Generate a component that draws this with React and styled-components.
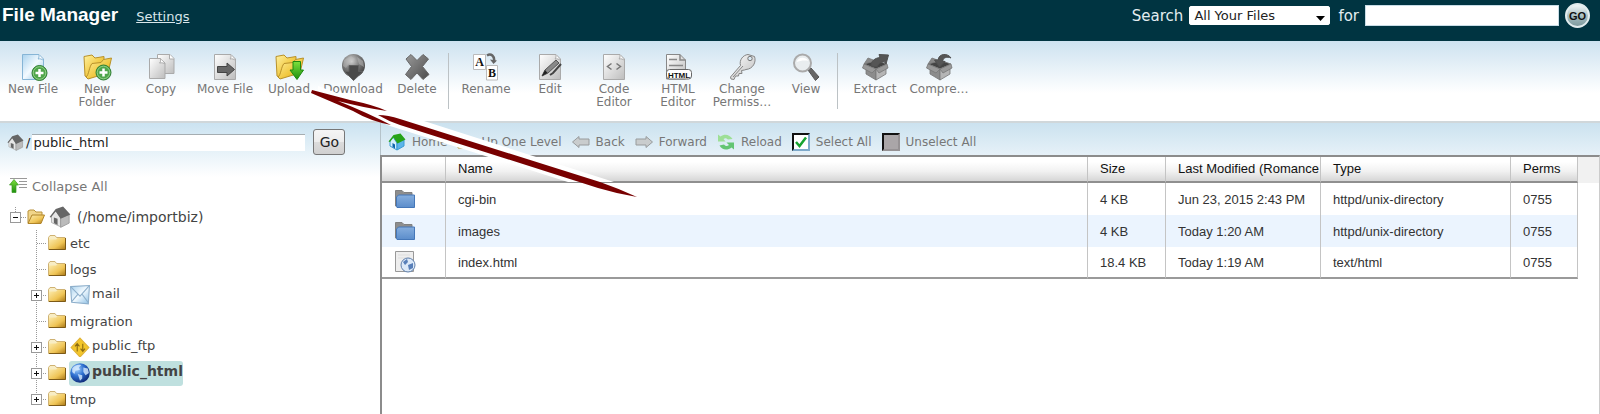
import React from "react";
import styled, { createGlobalStyle } from "styled-components";

const GlobalStyle = createGlobalStyle`
  * { box-sizing: border-box; }
  body {
    margin: 0;
    background: #fff;
    color: #333;
    font-family: "DejaVu Sans", Verdana, sans-serif;
    font-size: 13px;
  }
  button, input, select { font-family: inherit; margin: 0; }
  svg { display: block; flex: none; }
`;

const Page = styled.div`
  display: flex;
  flex-direction: column;
  min-height: 100vh;
  position: relative;
  overflow: hidden;
`;

/* ---------- header ---------- */

const Header = styled.header`
  display: flex;
  align-items: center;
  justify-content: space-between;
  height: 41px;
  padding: 0 10px 12px 2px;
  background: #003441;
  color: #fff;
`;

const Brand = styled.div`
  display: flex;
  align-items: baseline;
  gap: 18px;
`;

const Title = styled.h1`
  margin: 0;
  font: bold 19px/24px "Liberation Sans", Arial, sans-serif;
`;

const SettingsLink = styled.a`
  color: #d9e6ea;
  font-size: 13px;
`;

const SearchForm = styled.form`
  display: flex;
  align-items: center;
  gap: 6px;
  padding-top: 2px;
  font-size: 15px;
  color: #e3edf0;
`;

const SelectWrap = styled.span`
  position: relative;
  display: block;
  margin-right: 2px;
  svg { position: absolute; right: 5px; top: 10px; pointer-events: none; }
`;

const Select = styled.select`
  appearance: none;
  display: block;
  width: 141px;
  height: 19px;
  padding: 0 4px;
  border: 1px solid #fff;
  border-radius: 2px;
  background: #fff;
  color: #222;
  font-size: 13px;
  line-height: 17px;
`;

const SearchInput = styled.input`
  width: 194px;
  height: 21px;
  border: 1px solid #c8dce6;
  background: #fff;
`;

const RoundButton = styled.button`
  width: 25px;
  height: 25px;
  padding: 0;
  border: 2px solid #e2ecee;
  border-radius: 50%;
  background: linear-gradient(#f2f7f8, #9fb8bc 60%, #7f9a9e);
  color: #111;
  font: bold 11px/20px "Liberation Sans", Arial, sans-serif;
`;

/* ---------- toolbar ---------- */

const Toolbar = styled.nav`
  display: flex;
  min-height: 81px;
  padding: 12px 0 12px 1px;
  border-bottom: 2px solid #d0d7da;
  background: linear-gradient(#cde2f0, #ffffff 52px);
`;

const ToolButton = styled.button`
  display: flex;
  flex-direction: column;
  align-items: center;
  gap: 2px;
  width: 64px;
  padding: 0;
  border: 0;
  background: none;
  color: #777;
  font-size: 12px;
  line-height: 13px;
`;

const Divider = styled.span`
  width: 1px;
  margin: 0 5px 0 -1px;
  background: #bcc2c5;
`;

/* ---------- body ---------- */

const Body = styled.div`
  display: flex;
  flex: 1;
`;

const Sidebar = styled.aside`
  flex: none;
  width: 380px;
  padding: 5px 0 0 7px;
  background: linear-gradient(#cbe3f1, #ffffff 54px);
`;

const PathForm = styled.form`
  display: flex;
  align-items: center;
  height: 28px;
  font-size: 13px;
  color: #222;
  label { padding: 0 2px; }
`;

const PathInput = styled.input`
  width: 273px;
  height: 17px;
  margin-right: 8px;
  padding: 0 1px;
  border: 0;
  border-top: 1px solid #a5adb1;
  background: #fff;
  color: #222;
  font-size: 13px;
`;

const GoButton = styled.button`
  width: 32px;
  height: 26px;
  padding: 0;
  border: 1px solid #777;
  border-radius: 3px;
  background: linear-gradient(#f5f5f5, #ececec 50%, #dcdcdc 50%, #d0d0d0);
  color: #222;
  font-size: 14px;
`;

const CollapseButton = styled.button`
  display: flex;
  align-items: center;
  gap: 5px;
  height: 26px;
  margin: 17px 0 5px;
  padding: 0 0 0 2px;
  border: 0;
  background: none;
  color: #777;
  font-size: 13px;
`;

const Tree = styled.ul`
  margin: 0;
  padding: 0;
  list-style: none;
  font-size: 13px;
`;

const Branch = styled(Tree)`
  padding-left: 21px;
`;

const TreeRow = styled.div`
  display: flex;
  align-items: center;
  height: 26px;
`;

const TreeLabel = styled.a`
  display: flex;
  align-items: center;
  gap: ${(p) => (p.$wide ? "6px" : "2px")};
  height: 25px;
  margin-left: 3px;
  padding: 0 0 0 1px;
  border-radius: 3px;
  text-decoration: none;
  color: #444;
  background: ${(p) => (p.$selected ? "#bfe0df" : "none")};
  font-weight: ${(p) => (p.$selected ? "bold" : "normal")};
  font-size: ${(p) => (p.$large ? "14px" : "13px")};
  span { padding-bottom: ${(p) => (p.$raised ? "4px" : "0")}; }
`;

const Main = styled.main`
  flex: 1;
  min-width: 0;
  display: flex;
  flex-direction: column;
`;

const ActionBar = styled.div`
  display: flex;
  align-items: center;
  gap: 10px;
  height: 32px;
  padding: 5px 0 0 7px;
  border-left: 1px solid #b5c3ca;
  background: linear-gradient(#cbe2ef, #e6f1f8);
`;

const ActionButton = styled.button`
  display: flex;
  align-items: center;
  gap: 6px;
  padding: 0;
  border: 0;
  background: none;
  color: #777;
  font-size: 12px;
  line-height: 18px;
  white-space: nowrap;
`;

const Listing = styled.div`
  flex: 1;
  border: solid #8c8c8c;
  border-width: 2px 1px 0 2px;
  border-right-color: #ccc;
`;

const Table = styled.table`
  width: 100%;
  table-layout: fixed;
  border-collapse: separate;
  border-spacing: 0;
  font-family: "Liberation Sans", Arial, sans-serif;
  font-size: 13px;
`;

const Col = styled.col`
  width: ${(p) => p.$width || "auto"};
`;

const HeadCell = styled.th`
  height: 26px;
  padding: 0 0 2px 12px;
  border-right: 1px solid #c4c4c4;
  border-bottom: 2px solid #8f8f8f;
  background: linear-gradient(#ffffff 20%, #f1f1f1 60%, #d6d6d6);
  color: #111;
  font-weight: normal;
  text-align: left;
  white-space: nowrap;
  overflow: hidden;
`;

const HeadFiller = styled.td`
  padding: 0;
  background: #f1f1f1;
`;

const Row = styled.tr`
  background: ${(p) => (p.$striped ? "#ebf4fe" : "#fff")};
  &:last-child td:not(:last-child) { border-bottom: 2px solid #9a9a9a; }
`;

const Cell = styled.td`
  height: 32px;
  padding: 0 0 0 12px;
  border-right: 1px solid #c4c4c4;
  white-space: nowrap;
`;

const IconCell = styled(Cell)`
  padding-left: 12px;
`;

const Gutter = styled.td`
  padding: 0;
  background: #fff;
`;

const Callout = styled.svg`
  position: absolute;
  left: 306px;
  top: 82px;
  pointer-events: none;
`;

/* ---------- icons ---------- */

const Defs = () => (
  <svg width="0" height="0" style={{ position: "absolute" }} aria-hidden="true">
    <defs>
      <linearGradient id="gold" x1="0" y1="0" x2="1" y2="1">
        <stop offset="0" stopColor="#fff1a0" />
        <stop offset="0.6" stopColor="#f0c63c" />
        <stop offset="1" stopColor="#c08a12" />
      </linearGradient>
      <linearGradient id="tan" x1="0" y1="0" x2="1" y2="1">
        <stop offset="0" stopColor="#fdeeb4" />
        <stop offset="0.6" stopColor="#efc455" />
        <stop offset="1" stopColor="#a87616" />
      </linearGradient>
      <linearGradient id="grey" x1="0" y1="0" x2="1" y2="1">
        <stop offset="0" stopColor="#ffffff" />
        <stop offset="1" stopColor="#bdbdbd" />
      </linearGradient>
      <linearGradient id="ice" x1="0" y1="0" x2="1" y2="1">
        <stop offset="0" stopColor="#a9d2ee" />
        <stop offset="0.5" stopColor="#f3faff" />
        <stop offset="1" stopColor="#8bbfe4" />
      </linearGradient>
      <linearGradient id="leaf" x1="0" y1="0" x2="0" y2="1">
        <stop offset="0" stopColor="#7ee03c" />
        <stop offset="1" stopColor="#1c8f10" />
      </linearGradient>
      <linearGradient id="steel" x1="0" y1="0" x2="1" y2="1">
        <stop offset="0" stopColor="#9a9a9a" />
        <stop offset="1" stopColor="#4c4c4c" />
      </linearGradient>
      <radialGradient id="ball" cx="0.4" cy="0.3" r="0.7">
        <stop offset="0" stopColor="#d4d4d4" />
        <stop offset="0.5" stopColor="#808080" />
        <stop offset="1" stopColor="#444" />
      </radialGradient>
      <radialGradient id="earth" cx="0.35" cy="0.3" r="0.8">
        <stop offset="0" stopColor="#a7d4ff" />
        <stop offset="0.45" stopColor="#2e6fd0" />
        <stop offset="1" stopColor="#0a1f6a" />
      </radialGradient>
      <linearGradient id="blue" x1="0" y1="0" x2="0" y2="1">
        <stop offset="0" stopColor="#86aede" />
        <stop offset="1" stopColor="#5b8dcb" />
      </linearGradient>
    </defs>
  </svg>
);

const Big = ({ children }) => (
  <svg width="29" height="28" viewBox="0 0 29 28" aria-hidden="true">{children}</svg>
);

const Sheet = ({ fill = "url(#grey)", stroke = "#aaa" }) => (
  <g fill={fill} stroke={stroke}>
    <path d="M3.500 1.500H20L24.500 6V26.500H3.500Z" />
    <path d="M19.500 1.500C20.500 3 20 5 19 6C21 5.500 23 6 24.500 7.500" fill="#fff" />
  </g>
);

const PlusBadge = ({ x, y }) => (
  <g>
    <circle cx={x} cy={y} r="7.500" fill="#4fa54b" stroke="#2f7d33" />
    <circle cx={x} cy={y} r="6.300" fill="none" stroke="#8fd084" strokeWidth="1" />
    <path d={`M${x - 4} ${y}h8M${x} ${y - 4}v8`} stroke="#fff" strokeWidth="2.500" />
  </g>
);

const OpenFolder = () => (
  <g stroke="#b8912a" strokeLinejoin="round">
    <path d="M2 23L1 3.500L9 2L12 5L21 3.500V9L5 25Z" fill="url(#gold)" />
    <path d="M3 24C6 22 6 14 9 10.500L18 9.500L20.500 6.500L28.500 5L25 20L5 26Z" fill="url(#gold)" />
  </g>
);

const NewFileIcon = () => (
  <Big><Sheet fill="url(#ice)" stroke="#86b5d6" /><PlusBadge x={20.500} y={20} /></Big>
);
const NewFolderIcon = () => (<Big><OpenFolder /><PlusBadge x={20.500} y={19.500} /></Big>);
const CopyIcon = () => (
  <Big>
    <g fill="url(#grey)" stroke="#aaa">
      <path d="M10.500 1.500H23L27 5.500V20.500H10.500Z" />
      <path d="M22.500 1.500V6H27" fill="#fff" />
      <path d="M2.500 5.500H13.500L18 10V25.500H2.500Z" />
      <path d="M13.500 5.500C14 8 13.500 9 12.500 10C15 9.500 17 10 18 11" fill="#fff" />
    </g>
  </Big>
);
const MoveIcon = () => (
  <Big><Sheet /><path d="M6.500 13.500H16V10L23.500 16.500L16 23V19.500H6.500Z" fill="#666" stroke="#444" /></Big>
);
const UploadIcon = () => (
  <Big><OpenFolder /><path d="M18 8.500H25.500V17H28.500L22 26.500L15 17H18Z" fill="url(#leaf)" stroke="#1d8a10" /></Big>
);
const DownloadIcon = () => (
  <Big>
    <circle cx="14.500" cy="12.500" r="11.500" fill="url(#ball)" />
    <path d="M5 7L12 3L16 6L10 10L7 15L4 13ZM18 4L24 8L25 14L20 11Z" fill="#bbb" opacity="0.5" />
    <path d="M10 12.500H19.500V18.500H24L14.500 27.500L5.500 18.500H10Z" fill="#4a4a4a" stroke="#606060" />
  </Big>
);
const DeleteIcon = () => (
  <Big>
    <path d="M3 6L8 1.500L14 7.500L20 1.500L25.500 6L19.500 13.500L26 21.500L20 26.500L14 20L8 26.500L2.500 21.500L8.500 13.500Z" fill="url(#steel)" stroke="#666" strokeLinejoin="round" />
  </Big>
);
const RenameIcon = () => (
  <Big>
    <path d="M1.500 1.500H13.500V16.500H1.500Z" fill="#fff" stroke="#bbb" />
    <path d="M14.500 12.500H25.500V27H14.500Z" fill="#fff" stroke="#bbb" />
    <text x="7.500" y="13" textAnchor="middle" fontFamily="Liberation Serif" fontWeight="bold" fontSize="12" fill="#111">A</text>
    <text x="20" y="24" textAnchor="middle" fontFamily="Liberation Serif" fontWeight="bold" fontSize="12" fill="#111">B</text>
    <path d="M15 2.500C19 0 23 3 22 9" fill="none" stroke="#666" strokeWidth="2.500" />
    <path d="M18 6.500L21.500 11L25 7.500Z" fill="#666" />
  </Big>
);
const EditIcon = () => (
  <Big>
    <Sheet />
    <path d="M6 23L9 17L20 7L23 10L12 20Z" fill="#888" stroke="#555" />
    <path d="M6 23L9 17L11.500 20Z" fill="#222" /><path d="M14 22L17 20L25 11" fill="none" stroke="#444" strokeWidth="2" />
  </Big>
);
const CodeIcon = () => (
  <Big><Sheet /><path d="M11.500 10.500L7.500 13.500L11.500 16.500M16.500 10.500L20.500 13.500L16.500 16.500" fill="none" stroke="#777" strokeWidth="1.500" /></Big>
);
const HtmlIcon = () => (
  <Big>
    <path d="M2.500 1.500H16L21.500 7V26H2.500Z" fill="url(#grey)" stroke="#888" />
    <path d="M5 6.500H13M5 12.500H19M16 1.500V7H21.500" fill="none" stroke="#888" strokeWidth="1.500" />
    <rect x="2.500" y="16.500" width="25" height="9.500" rx="3" fill="#fff" stroke="#666" />
    <text x="15" y="24.500" textAnchor="middle" fontFamily="Liberation Sans" fontWeight="bold" fontSize="8" fill="#111">HTML</text>
  </Big>
);
const KeyIcon = () => (
  <Big>
    <path d="M2.500 24L12.500 12.500C11 7 15 2 20 1.500L26.500 3.500C28.500 9 25 16 18 16.500L16.500 17L13.500 17.500L14 20.500L11 20.500L10.500 23L7.500 23L6 26.500L3 26Z" fill="url(#grey)" stroke="#858585" />
    <circle cx="22" cy="5.500" r="2.200" fill="#d9e8f2" stroke="#777" />
    <path d="M5 24L15 13" stroke="#888" fill="none" />
  </Big>
);
const ViewIcon = () => (
  <Big>
    <path d="M16 17L19 15L27 24L23.500 27.500Z" fill="#666" stroke="#555" />
    <circle cx="10.500" cy="10" r="8.500" fill="#e9edef" stroke="#aaa" strokeWidth="2" />
    <path d="M4.500 9C6 4 13 3 16.500 8C12 7 8 8 4.500 9Z" fill="#fff" />
  </Big>
);
const Box = () => (
  <g stroke="#777" strokeWidth="0.800" strokeLinejoin="round">
    <path d="M3 11L14 7L26 11L15 16Z" fill="#444" />
    <path d="M5 12L15 16V27L5 21Z" fill="#8c8c8c" />
    <path d="M15 16L25 12V21L15 27Z" fill="#b5b5b5" />
    <path d="M3 11L15 16L11 20L1.500 15ZM26 11L15 16L18 20L27 15Z" fill="#999" />
    <path d="M3 11L7 5L15 8Z" fill="#888" />
  </g>
);
const ExtractIcon = () => (
  <Big><Box /><path d="M10 13C10 8 14 5 19 4.500L18 1.500L27.500 2L25 11L23 8.500C20 9 17 11 16 14Z" fill="#555" stroke="#505050" /></Big>
);
const CompressIcon = () => (
  <Big><Box /><path d="M26 5C23 0 14 0 13 7L9.500 7L14.500 14L20 8.500L17.500 8C18 5 22 3 26 5Z" fill="#555" stroke="#505050" /></Big>
);

const Mini = ({ children, w = 18, h = 18 }) => (
  <svg width={w} height={h} viewBox="0 0 18 18" aria-hidden="true">{children}</svg>
);

const HomeColorIcon = () => (
  <Mini>
    <path d="M2 8L5 4L9 10V17L2 13Z" fill="#d5f0fd" stroke="#3b9ad4" />
    <path d="M9 10L16 6V13L9 17Z" fill="#5cb5ea" stroke="#3b9ad4" />
    <path d="M4.500 10V14L7 15.500V11.500Z" fill="#0d64ab" />
    <path d="M0.500 8.500L5.500 2L12.500 0.500L17.500 6.500L9.500 10.500L5.500 4.500L2 9Z" fill="#25a318" />
  </Mini>
);
const HomeGreyIcon = ({ size = 18 }) => (
  <Mini w={size} h={size}>
    <path d="M2 8L5.500 4L9.500 9.500V17L2 13.500Z" fill="#e6e6e6" stroke="#aaa" strokeWidth="0.700" />
    <path d="M9.500 9.500L16.500 7V14L9.500 17.500Z" fill="#bbb" stroke="#999" strokeWidth="0.700" />
    <path d="M4 9.500V14L7 15.500V10.500Z" fill="#666" />
    <path d="M0.500 9L5.500 2.500L11.500 0.500L17.500 7L9.500 10.500L5.500 4.500L1.500 9.500Z" fill="#666" />
  </Mini>
);
const UpIcon = () => (
  <Mini>
    <path d="M1 5V15H17V5H9L7 3H2Z" fill="url(#tan)" stroke="#b98d2c" />
    <path d="M9 2L14 8H11V13H7V8H4Z" fill="#eccf83" stroke="#c7a34d" />
  </Mini>
);
const BackIcon = () => (
  <Mini><path d="M0.500 9L7 3.500V6H17V12H7V14.500Z" fill="#c9cccd" stroke="#989b9c" /></Mini>
);
const ForwardIcon = () => (
  <Mini><path d="M17.500 9L11 3.500V6H1V12H11V14.500Z" fill="#c9cccd" stroke="#989b9c" /></Mini>
);
const ReloadIcon = () => (
  <Mini>
    <path d="M1 1.500L3.500 3.500C8 0 13 2 15.500 6L11 6.500C9 5 8 5 6.500 6L8.500 8.500H1Z" fill="#9ddf96" />
    <path d="M17 16.500L14.500 14.500C10 18 5 17 2.500 12.500L7 11.500C9 13.500 10 13.500 12 12L9.500 9.500H17Z" fill="#63c573" />
  </Mini>
);
const CheckedIcon = () => (
  <Mini>
    <path d="M0 0H18V18H0Z" fill="#7faacb" /><path d="M0 0H18L16 2H2V16L0 18Z" fill="#111" />
    <path d="M2 2H16V16H2Z" fill="#fff" />
    <path d="M4 9L7.500 13L14 4.500" fill="none" stroke="#17a32f" strokeWidth="2.500" />
  </Mini>
);
const UncheckedIcon = () => (
  <Mini><path d="M0 0H18V18H0Z" fill="#969294" /><path d="M0 0H18L16 2H2V16L0 18Z" fill="#111" /><path d="M2 2H16V16H2Z" fill="#aaa6a8" /></Mini>
);
const CollapseIcon = () => (
  <Mini>
    <path d="M10 4.500H18M10 7.500H18M10 10.500H18M1 1.500H18" stroke="#999" />
    <path d="M5 2.500L9.500 8H7V15.500H3V8H0.500Z" fill="url(#leaf)" stroke="#3a9a20" strokeWidth="0.700" />
  </Mini>
);
const TreeFolder = () => (
  <Mini>
    <path d="M0.500 15.500V3.500L2 1.500H7L8.500 3.500H17V15.500Z" fill="#f8edc4" stroke="#cfb273" />
    <path d="M1 5.500L8 5.500L9.500 4H17.500V15.500H1Z" fill="url(#tan)" />
    <path d="M1 15.500H17.500V4" fill="none" stroke="#7d5a17" />
  </Mini>
);
const TreeFolderOpen = () => (
  <Mini>
    <path d="M1 15V3L3 2H7L9 4H15V7" fill="#f1d58a" stroke="#b8913a" />
    <path d="M1 15.500L5 7H17.500L14 15.500Z" fill="url(#tan)" stroke="#b08428" />
  </Mini>
);
const MailIcon = () => (
  <Mini w={20} h={20}>
    <path d="M0.500 1.500L17.500 0.500L16.500 17L1.500 15.500Z" fill="url(#ice)" stroke="#8fb0cc" />
    <path d="M1 2L9 10L17 1M1.500 15L7 8.500M16.500 16L11 8.500" fill="none" stroke="#8fb0cc" />
  </Mini>
);
const FtpIcon = () => (
  <Mini w={20} h={20}>
    <path d="M9 1L17 9.500L9 18L1 9.500Z" fill="#f3c62b" stroke="#e0b43a" />
    <path d="M6.500 13V6.500M4.500 8.500L6.500 6L8.500 8.500M11.500 6V13M9.500 10.500L11.500 13L13.500 10.500" fill="none" stroke="#8a6a12" />
  </Mini>
);
const GlobeIcon = () => (
  <Mini w={20} h={20}>
    <circle cx="9" cy="9" r="8.800" fill="url(#earth)" />
    <path d="M2 5C4 2 8 1 10 2L8 4L9 6L5 7L4 10L2 8ZM12 4L16 5L17 9L14 11L12 8ZM7 10L11 11L11 14L9 16Z" fill="#d9ecff" opacity="0.800" />
  </Mini>
);
const ListFolderIcon = () => (
  <svg width="22" height="22" viewBox="0 0 22 22" aria-hidden="true">
    <path d="M1.500 18V2.500H8L10 4.500H18V18Z" fill="#8d8d8d" stroke="#808080" />
    <path d="M2.500 18.500V9L4.500 7H20.500V19.500H3Z" fill="url(#blue)" stroke="#4577b8" />
  </svg>
);
const ListHtmlIcon = () => (
  <svg width="22" height="22" viewBox="0 0 22 22" aria-hidden="true">
    <path d="M1.500 0.500H19.500V20.500H1.500Z" fill="#eee" stroke="#999" />
    <path d="M4 4H16M4 7H16" stroke="#ddd" />
    <circle cx="14" cy="14" r="7" fill="#dce9f8" stroke="#6080ac" />
    <path d="M9 11L13 8L14 11L11 14ZM14 14L19 12L19 17L15 19Z" fill="#587fb9" />
  </svg>
);

/* Dotted guide lines with an optional expander box. */
const Guide = ({ box, root, last }) => (
  <svg width="20" height="26" viewBox="0 0 20 26" aria-hidden="true">
    {root
      ? <path d="M8.500 3V8M14 13.500H19" stroke="#999" strokeDasharray="1 1" />
      : <path d={`M8.500 0V${last ? 13 : 26}M9 13.500H19`} stroke="#999" strokeDasharray="1 1" fill="none" />}
    {box && (
      <g>
        <rect x="3.500" y="8.500" width="10" height="10" fill="#fff" stroke="#999" />
        <path d={box === "minus" ? "M6 13.500H11" : "M6 13.500H11M8.500 11V16"} stroke="#111" />
      </g>
    )}
  </svg>
);

/* ---------- data ---------- */

const tools = [
  ["New File", NewFileIcon], ["New Folder", NewFolderIcon], ["Copy", CopyIcon],
  ["Move File", MoveIcon], ["Upload", UploadIcon], ["Download", DownloadIcon],
  ["Delete", DeleteIcon], null,
  ["Rename", RenameIcon], ["Edit", EditIcon], ["Code Editor", CodeIcon],
  ["HTML Editor", HtmlIcon], ["Change Permiss…", KeyIcon], ["View", ViewIcon], null,
  ["Extract", ExtractIcon], ["Compre…", CompressIcon],
];

const actions = [
  ["Home", HomeColorIcon], ["Up One Level", UpIcon], ["Back", BackIcon],
  ["Forward", ForwardIcon], ["Reload", ReloadIcon], ["Select All", CheckedIcon],
  ["Unselect All", UncheckedIcon],
];

const folders = [
  { name: "etc" },
  { name: "logs" },
  { name: "mail", box: "plus", Icon: MailIcon },
  { name: "migration" },
  { name: "public_ftp", box: "plus", Icon: FtpIcon },
  { name: "public_html", box: "plus", Icon: GlobeIcon, selected: true },
  { name: "tmp", box: "plus" },
];

const files = [
  [ListFolderIcon, "cgi-bin", "4 KB", "Jun 23, 2015 2:43 PM", "httpd/unix-directory", "0755"],
  [ListFolderIcon, "images", "4 KB", "Today 1:20 AM", "httpd/unix-directory", "0755"],
  [ListHtmlIcon, "index.html", "18.4 KB", "Today 1:19 AM", "text/html", "0755"],
];

const stop = (e) => e.preventDefault();

export default function App() {
  return (
    <Page>
      <GlobalStyle />
      <Defs />
      <Header>
        <Brand>
          <Title>File Manager</Title>
          <SettingsLink href="#settings">Settings</SettingsLink>
        </Brand>
        <SearchForm onSubmit={stop}>
          <label htmlFor="scope">Search</label>
          <SelectWrap>
            <Select id="scope"><option>All Your Files</option></Select>
            <svg width="9" height="5" viewBox="0 0 9 5" aria-hidden="true"><path d="M0 0H9L4.500 5Z" fill="#000" /></svg>
          </SelectWrap>
          <label htmlFor="query">for</label>
          <SearchInput id="query" />
          <RoundButton type="submit">GO</RoundButton>
        </SearchForm>
      </Header>
      <Toolbar>
        {tools.map((tool, i) => {
          if (!tool) return <Divider key={i} />;
          const [label, Icon] = tool;
          return <ToolButton key={label} type="button"><Icon />{label}</ToolButton>;
        })}
      </Toolbar>
      <Body>
        <Sidebar>
          <PathForm onSubmit={stop}>
            <HomeGreyIcon size={17} />
            <label htmlFor="path">/</label>
            <PathInput id="path" defaultValue="public_html" />
            <GoButton type="submit">Go</GoButton>
          </PathForm>
          <CollapseButton type="button"><CollapseIcon />Collapse All</CollapseButton>
          <Tree>
            <li>
              <TreeRow>
                <Guide root box="minus" />
                <TreeFolderOpen />
                <TreeLabel href="#home" $large $wide><HomeGreyIcon size={22} /><span>(/home/importbiz)</span></TreeLabel>
              </TreeRow>
              <Branch>
                {folders.map(({ name, box, Icon, selected }, i) => (
                  <li key={name}>
                    <TreeRow>
                      <Guide box={box} last={i === folders.length - 1} />
                      <TreeFolder />
                      <TreeLabel href={`#${name}`} $selected={selected} $large={selected} $raised={!!Icon}>
                        {Icon && <Icon />}
                        <span>{name}</span>
                      </TreeLabel>
                    </TreeRow>
                  </li>
                ))}
              </Branch>
            </li>
          </Tree>
        </Sidebar>
        <Main>
          <ActionBar>
            {actions.map(([label, Icon]) => (
              <ActionButton key={label} type="button"><Icon />{label}</ActionButton>
            ))}
          </ActionBar>
          <Listing>
            <Table>
              <colgroup>
                <Col $width="64px" /><Col /><Col $width="78px" /><Col $width="155px" />
                <Col $width="190px" /><Col $width="67px" /><Col $width="21px" />
              </colgroup>
              <thead>
                <tr>
                  <HeadCell aria-label="Kind" />
                  <HeadCell>Name</HeadCell>
                  <HeadCell>Size</HeadCell>
                  <HeadCell>Last Modified (Romance S</HeadCell>
                  <HeadCell>Type</HeadCell>
                  <HeadCell>Perms</HeadCell>
                  <HeadFiller />
                </tr>
              </thead>
              <tbody>
                {files.map(([Icon, name, ...rest], i) => (
                  <Row key={name} $striped={i % 2 === 1}>
                    <IconCell><Icon /></IconCell>
                    <Cell>{name}</Cell>
                    {rest.map((value, j) => <Cell key={j}>{value}</Cell>)}
                    <Gutter />
                  </Row>
                ))}
              </tbody>
            </Table>
          </Listing>
        </Main>
      </Body>
      <Callout width="336" height="120" viewBox="306 82 336 120" aria-hidden="true">
        <path d="M318 86L372 106L424 121L614 182H568L390 126L318 97Z" fill="#fff" />
        <path d="M312 90L350 100Q374 105 387 111Q365 108 338 101Q368 113 391 125Q370 121 353 111L311 93Z" fill="#780000" />
        <path d="M378 115Q388 115 400 119L600 182Q620 189 637 197Q618 194 598 188L400 125Q388 121 378 115Z" fill="#780000" />
      </Callout>
    </Page>
  );
}
